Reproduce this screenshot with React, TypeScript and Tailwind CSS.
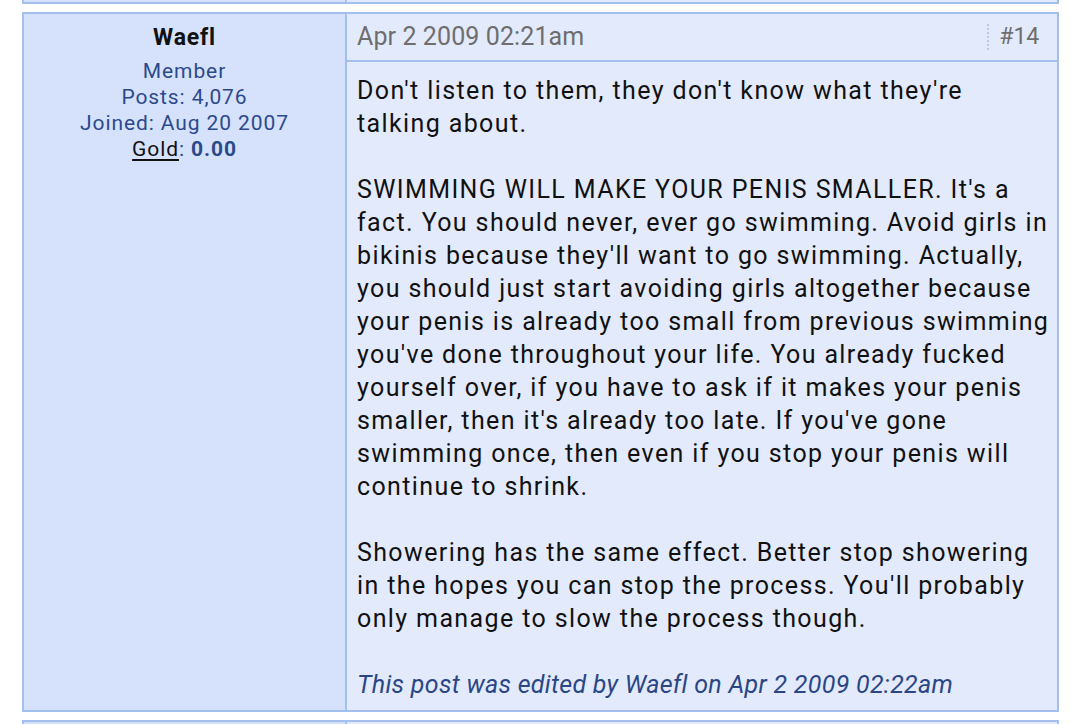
import React from "react";

const border = "border-[#a3bfee]";

const paragraphs: string[][] = [
  ["Don't listen to them, they don't know what they're", "talking about."],
  [
    "SWIMMING WILL MAKE YOUR PENIS SMALLER. It's a",
    "fact. You should never, ever go swimming. Avoid girls in",
    "bikinis because they'll want to go swimming. Actually,",
    "you should just start avoiding girls altogether because",
    "your penis is already too small from previous swimming",
    "you've done throughout your life. You already fucked",
    "yourself over, if you have to ask if it makes your penis",
    "smaller, then it's already too late. If you've gone",
    "swimming once, then even if you stop your penis will",
    "continue to shrink.",
  ],
  [
    "Showering has the same effect. Better stop showering",
    "in the hopes you can stop the process. You'll probably",
    "only manage to slow the process though.",
  ],
];

function PostBody() {
  return (
    <div className="text-[25px] leading-[33px] text-[#111] tracking-[1.38px] flex flex-col gap-[33px]">
      {paragraphs.map((lines, i) => (
        <div key={i}>
          {lines.map((l, j) => (
            <div key={j} className="whitespace-nowrap">
              {l}
            </div>
          ))}
        </div>
      ))}
      <div className="italic text-[#2a4685] tracking-[0.3px] whitespace-nowrap">
        This post was edited by Waefl on Apr 2 2009 02:22am
      </div>
    </div>
  );
}

export default function App() {
  return (
    <div className="bg-white font-['Roboto','Noto_Sans',sans-serif] overflow-hidden h-[724px]">
      {/* previous post tail */}
      <div className={`ml-[22px] mr-[21px] h-[4px] flex border-2 border-t-0 ${border}`}>
        <div className={`w-[323px] bg-[#d6e2fc] border-r-2 ${border}`} />
        <div className="flex-1 bg-[#e3eafc]" />
      </div>

      <div className={`mt-[8px] ml-[22px] mr-[21px] flex border-2 ${border}`}>
        <div className={`w-[323px] shrink-0 bg-[#d6e2fc] border-r-2 ${border} pt-[10px] flex flex-col items-center text-center`}>
          <div className="text-[23px] leading-[28px] font-bold text-[#111] tracking-[0.8px]">Waefl</div>
          <div className="text-[21px] leading-[26px] text-[#2b4a8c] mt-[6px] tracking-[0.9px]">
            <div>Member</div>
            <div>Posts: 4,076</div>
            <div>Joined: Aug 20 2007</div>
            <div>
              <span className="underline underline-offset-[3px] text-[#111]">Gold</span>:{" "}
              <span className="font-bold">0.00</span>
            </div>
          </div>
        </div>

        <div className="flex-1 flex flex-col bg-[#e3eafc]">
          <div className={`h-[48px] flex items-center justify-between border-b-2 ${border} pl-[10px] pr-[18px]`}>
            <span className="text-[25px] text-[#6e6e6e] tracking-[0.1px]">Apr 2 2009 02:21am</span>
            <span className="text-[23px] text-[#6e6e6e] border-l-2 border-dotted border-[#b9c9ea] pl-[10px] leading-[26px]">#14</span>
          </div>
          <div className="pl-[10px] pr-[8px] pt-[12px] pb-[9px]">
            <PostBody />
          </div>
        </div>
      </div>

      {/* next post head */}
      <div className={`mt-[8px] ml-[22px] mr-[21px] h-[10px] flex border-2 border-b-0 ${border}`}>
        <div className={`w-[323px] bg-[#d6e2fc] border-r-2 ${border}`} />
        <div className="flex-1 bg-[#e3eafc]" />
      </div>
    </div>
  );
}
